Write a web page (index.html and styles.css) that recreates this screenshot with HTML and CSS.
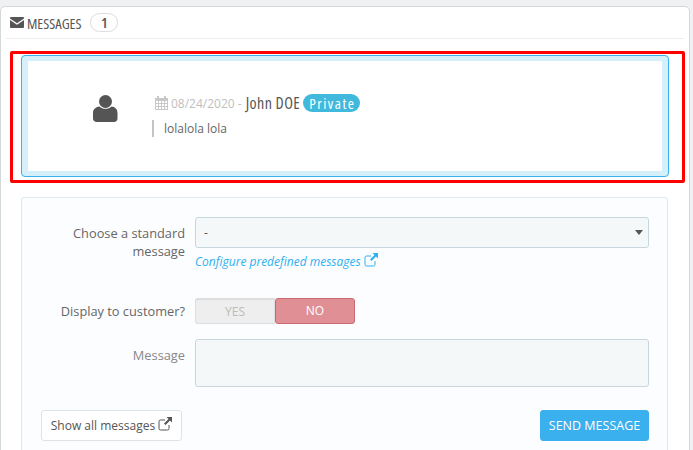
FILE: index.html
```html
<!DOCTYPE html>
<html lang="en">
<head>
<meta charset="UTF-8">
<meta name="viewport" content="width=device-width, initial-scale=1.0">
<title>Messages</title>
<link rel="stylesheet" href="styles.css">
</head>
<body>

<div class="panel">
    <div class="panel-heading">
        <svg class="icon-envelope" viewBox="0 0 14 11"><path d="M0 1a1 1 0 0 1 1-1h12a1 1 0 0 1 1 1v.6L7 6.2 0 1.6z"/><path d="M0 3.1l7 4.6 7-4.6V10a1 1 0 0 1-1 1H1a1 1 0 0 1-1-1z"/></svg>
        <span class="heading-text">MESSAGES</span>
        <span class="badge-count">1</span>
    </div>

    <div class="highlight">
        <div class="message-box">
            <div class="message-inner">
                <div class="avatar">
                    <svg class="icon-user" viewBox="0 0 25 27"><circle cx="12.5" cy="6.5" r="6.5"/><path d="M6.5 11.5c1.500 1.500 3.700 2.300 6 2.300s4.500-.8 6-2.300c3.500 .4 6 2.500 6 6.500v5.500c0 2-1.500 3.500-3.500 3.500h-17C1.500 27 0 25.500 0 23.500V18c0-4 3-6.100 6.500-6.500z"/></svg>
                </div>
                <div class="message-body">
                    <div class="message-meta">
                        <svg class="icon-calendar" viewBox="0 0 13 14"><path d="M2 0h2v2h5V0h2v2h2v12H0V2h2zM1 5v2h2V5zm3 0v2h2V5zm3 0v2h2V5zm3 0v2h2V5zM1 8v2h2V8zm3 0v2h2V8zm3 0v2h2V8zm3 0v2h2V8zM1 11v2h2v-2zm3 0v2h2v-2zm3 0v2h2v-2zm3 0v2h2v-2z"/></svg>
                        <span class="message-date">08/24/2020 -</span>
                        <span class="message-author">John DOE</span>
                        <span class="badge-private">Private</span>
                    </div>
                    <div class="message-text">lolalola lola</div>
                </div>
            </div>
        </div>
    </div>

    <form class="well">
        <div class="form-row row-select">
            <label class="form-label">Choose a standard message</label>
            <div class="form-field">
                <div class="select-box">
                    <span>-</span>
                    <span class="select-arrow"></span>
                </div>
                <a class="config-link" href="#">Configure predefined messages
                    <svg class="icon-external" viewBox="0 0 14 14"><path d="M11 8v3.500A1.500 1.500 0 0 1 9.500 13h-7A1.500 1.500 0 0 1 1 11.500v-7A1.500 1.500 0 0 1 2.500 3H7"/><path class="arrow-fill" d="M8.500 0H14v5.500l-2-2-4.500 4.500-1.500-1.500L10.500 2z"/></svg>
                </a>
            </div>
        </div>
        <div class="form-row row-toggle">
            <label class="form-label">Display to customer?</label>
            <div class="toggle">
                <span class="toggle-yes">YES</span>
                <span class="toggle-no">NO</span>
            </div>
        </div>
        <div class="form-row row-message">
            <label class="form-label label-muted">Message</label>
            <div class="textarea-box"></div>
        </div>
        <div class="form-actions">
            <button type="button" class="btn-default">Show all messages
                <svg class="icon-external" viewBox="0 0 14 14"><path d="M11 8v3.500A1.500 1.500 0 0 1 9.500 13h-7A1.500 1.500 0 0 1 1 11.500v-7A1.500 1.500 0 0 1 2.500 3H7"/><path class="arrow-fill" d="M8.500 0H14v5.500l-2-2-4.500 4.500-1.500-1.500L10.500 2z"/></svg>
            </button>
            <button type="button" class="btn-primary">SEND MESSAGE</button>
        </div>
    </form>
</div>

</body>
</html>
```

FILE: styles.css
```css
html, body {
    height: 450px;
    overflow: hidden;
}
body {
    font-family: "Open Sans", sans-serif;
    font-size: 12px;
    margin: 0;
    padding: 6px 3px 0 0;
    box-sizing: border-box;
    background-color: #eff1f2;
    color: #555;
}
.panel {
    background-color: #fff;
    border: 1px solid #d3d8db;
    border-radius: 5px;
    padding: 0 5px;
    height: 460px;
    box-sizing: border-box;
}
.panel-heading {
    display: flex;
    align-items: center;
    height: 31px;
    padding-left: 4px;
    border-bottom: 1px solid #eee;
}
.icon-envelope {
    width: 14px;
    height: 11px;
    fill: #555;
    margin-right: 3px;
}
.heading-text {
    font-stretch: 75%;
    font-size: 14.6px;
    color: #555;
}
.badge-count {
    margin-left: 9px;
    width: 28px;
    height: 19px;
    box-sizing: border-box;
    border: 1px solid #ddd;
    border-radius: 10px;
    text-align: center;
    line-height: 17px;
    font-stretch: 75%;
    font-size: 15px;
    font-weight: 600;
}
.highlight {
    margin: 12px 0 0 4px;
    width: 675px;
    height: 132px;
    box-sizing: border-box;
    border: 3px solid #f00;
    border-radius: 2px;
    padding: 1px 13px 3px 8px;
}
.message-box {
    height: 122px;
    box-sizing: border-box;
    border: 1px solid #3ab0ee;
    border-radius: 4px;
    background-color: #d5f0fa;
    padding: 5px 6px;
}
.message-inner {
    display: flex;
    height: 110px;
    background-color: #fff;
}
.avatar {
    width: 124px;
    padding: 34px 0 0 65px;
    box-sizing: border-box;
}
.icon-user {
    display: block;
    width: 25px;
    height: 27px;
    fill: #555;
}
.message-body {
    padding-top: 33px;
}
.message-meta {
    display: flex;
    align-items: center;
    height: 18px;
    padding-left: 3px;
    white-space: nowrap;
}
.icon-calendar {
    width: 13px;
    height: 14px;
    fill: #c8c8c8;
    margin-right: 3px;
}
.message-date {
    color: #c0c0c0;
    margin-right: 4px;
}
.message-author {
    font-stretch: 75%;
    font-size: 16px;
    letter-spacing: .4px;
    color: #555;
    margin-right: 3px;
}
.badge-private {
    background-color: #41b9dc;
    color: #fff;
    font-stretch: 75%;
    font-size: 15px;
    letter-spacing: 1.5px;
    border-radius: 9px;
    height: 18px;
    line-height: 18px;
    padding: 0 5px 0 6px;
}
.message-text {
    margin-top: 8px;
    border-left: 2px solid #c4c4c4;
    padding-left: 10px;
    height: 17px;
    line-height: 17px;
    font-size: 12px;
    color: #666;
}
.well {
    margin: 14px 0 0 15px;
    width: 647px;
    height: 260px;
    box-sizing: border-box;
    background-color: #fcfdfe;
    border: 1px solid #dfe8ed;
    border-radius: 3px;
}
.form-row {
    display: flex;
    align-items: flex-start;
}
.form-label {
    width: 163px;
    flex: none;
    text-align: right;
    line-height: 18px;
    font-size: 12.8px;
    color: #666;
}
.label-muted {
    padding-top: 7px;
    color: #888;
}
.form-field {
    margin-left: 10px;
}
.row-select {
    padding-top: 19px;
}
.row-select .form-label {
    padding-top: 7px;
}
.select-box {
    display: flex;
    justify-content: space-between;
    align-items: center;
    width: 454px;
    height: 31px;
    box-sizing: border-box;
    background-color: #f5f8f9;
    border: 1px solid #c7d6db;
    border-radius: 3px;
    padding: 0 5px 0 8px;
}
.select-arrow {
    width: 0;
    height: 0;
    border-left: 4px solid transparent;
    border-right: 4px solid transparent;
    border-top: 5px solid #555;
}
.config-link {
    display: block;
    margin-top: 5px;
    font-size: 12px;
    font-style: italic;
    color: #2eb0f0;
    text-decoration: none;
}
.icon-external {
    width: 14px;
    height: 14px;
    vertical-align: -1px;
    fill: none;
    stroke: currentColor;
}
.arrow-fill {
    fill: currentColor;
    stroke: none;
}
.row-toggle {
    margin-top: 28px;
    align-items: center;
}
.toggle {
    display: flex;
    margin-left: 10px;
    width: 160px;
    height: 26px;
    line-height: 24px;
    text-align: center;
}
.toggle-yes {
    flex: 1;
    box-sizing: border-box;
    background-color: #eee;
    border: 1px solid #ddd;
    border-top: 2px solid #ddd;
    border-radius: 3px 0 0 3px;
    color: #bbb;
}
.toggle-no {
    flex: 1;
    box-sizing: border-box;
    background-color: #e08f95;
    border: 1px solid #c96a72;
    border-radius: 3px;
    color: #fff;
}
.row-message {
    margin-top: 15px;
}
.textarea-box {
    margin-left: 10px;
    width: 454px;
    height: 48px;
    box-sizing: border-box;
    background-color: #f5f8f9;
    border: 1px solid #c7d6db;
    border-radius: 3px;
}
.form-actions {
    display: flex;
    justify-content: space-between;
    margin-top: 23px;
    padding: 0 18px 0 19px;
}
.btn-default, .btn-primary {
    height: 31px;
    font-family: inherit;
    font-size: 12px;
    border-radius: 3px;
    padding: 0;
}
.btn-default {
    width: 141px;
    background-color: #fff;
    border: 1px solid #dde3e6;
    color: #555;
}
.btn-primary {
    width: 109px;
    font-size: 12.5px;
    background-color: #3ab0ee;
    border: 1px solid #3ab0ee;
    color: #fff;
}
```
